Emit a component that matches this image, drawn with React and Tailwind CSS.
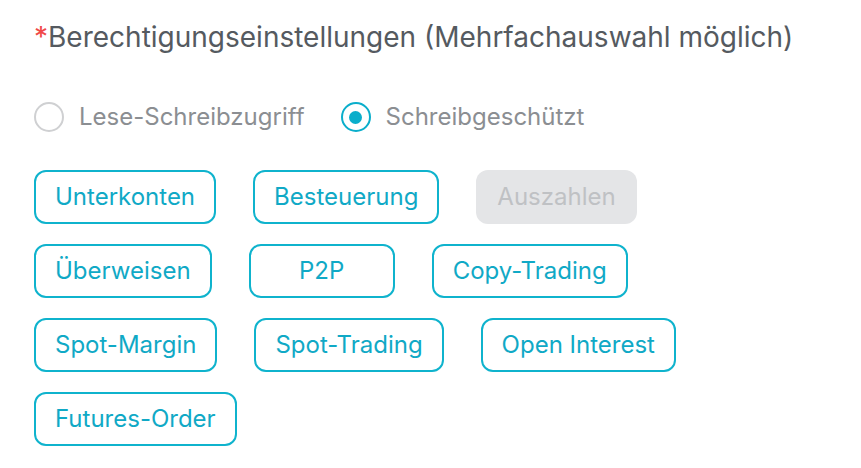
import { useState } from 'react';

const PERMISSIONS = [
  { key: 'sub', label: 'Unterkonten' },
  { key: 'tax', label: 'Besteuerung' },
  { key: 'withdraw', label: 'Auszahlen', disabled: true },
  { key: 'transfer', label: 'Überweisen' },
  { key: 'p2p', label: 'P2P' },
  { key: 'copy', label: 'Copy-Trading' },
  { key: 'margin', label: 'Spot-Margin' },
  { key: 'spot', label: 'Spot-Trading' },
  { key: 'oi', label: 'Open Interest' },
  { key: 'futures', label: 'Futures-Order' },
];

function Radio({ checked, label, onClick }) {
  return (
    <button onClick={onClick} className="flex items-center gap-[15px] h-[32px]">
      <span
        className={`w-[30px] h-[30px] rounded-full border-2 flex items-center justify-center ${
          checked ? 'border-[#0aaecb]' : 'border-[#cfd0d2]'
        }`}
      >
        {checked && <span className="w-[13px] h-[13px] rounded-full bg-[#0aaecb]" />}
      </span>
      <span className="text-[24px] leading-[32px] text-[#8b8e92]">{label}</span>
    </button>
  );
}

export default function App() {
  const [mode, setMode] = useState('readonly');

  return (
    <div className="w-[861px] h-[468px] bg-white pl-[34px] pt-[19px] font-['Inter',sans-serif]">
      <h3 className="text-[28px] leading-[36px] text-[#555a60]">
        <span className="text-[#f04848]">*</span>Berechtigungseinstellungen (Mehrfachauswahl möglich)
      </h3>

      <div className="flex items-center gap-[36px] mt-[46px]">
        <Radio checked={mode === 'rw'} label="Lese-Schreibzugriff" onClick={() => setMode('rw')} />
        <Radio checked={mode === 'readonly'} label="Schreibgeschützt" onClick={() => setMode('readonly')} />
      </div>

      <div className="flex flex-wrap gap-x-[37px] gap-y-[20px] mt-[37px] w-[700px]">
        {PERMISSIONS.map((p) => (
          <button
            key={p.key}
            disabled={p.disabled}
            className={`h-[54px] min-w-[146px] px-[19px] rounded-[12px] text-[24px] ${
              p.disabled
                ? 'bg-[#e4e5e7] text-[#bfc1c4] border-2 border-transparent'
                : 'border-2 border-[#0fb3cd] text-[#10a9c6] bg-white'
            }`}
          >
            {p.label}
          </button>
        ))}
      </div>
    </div>
  );
}
